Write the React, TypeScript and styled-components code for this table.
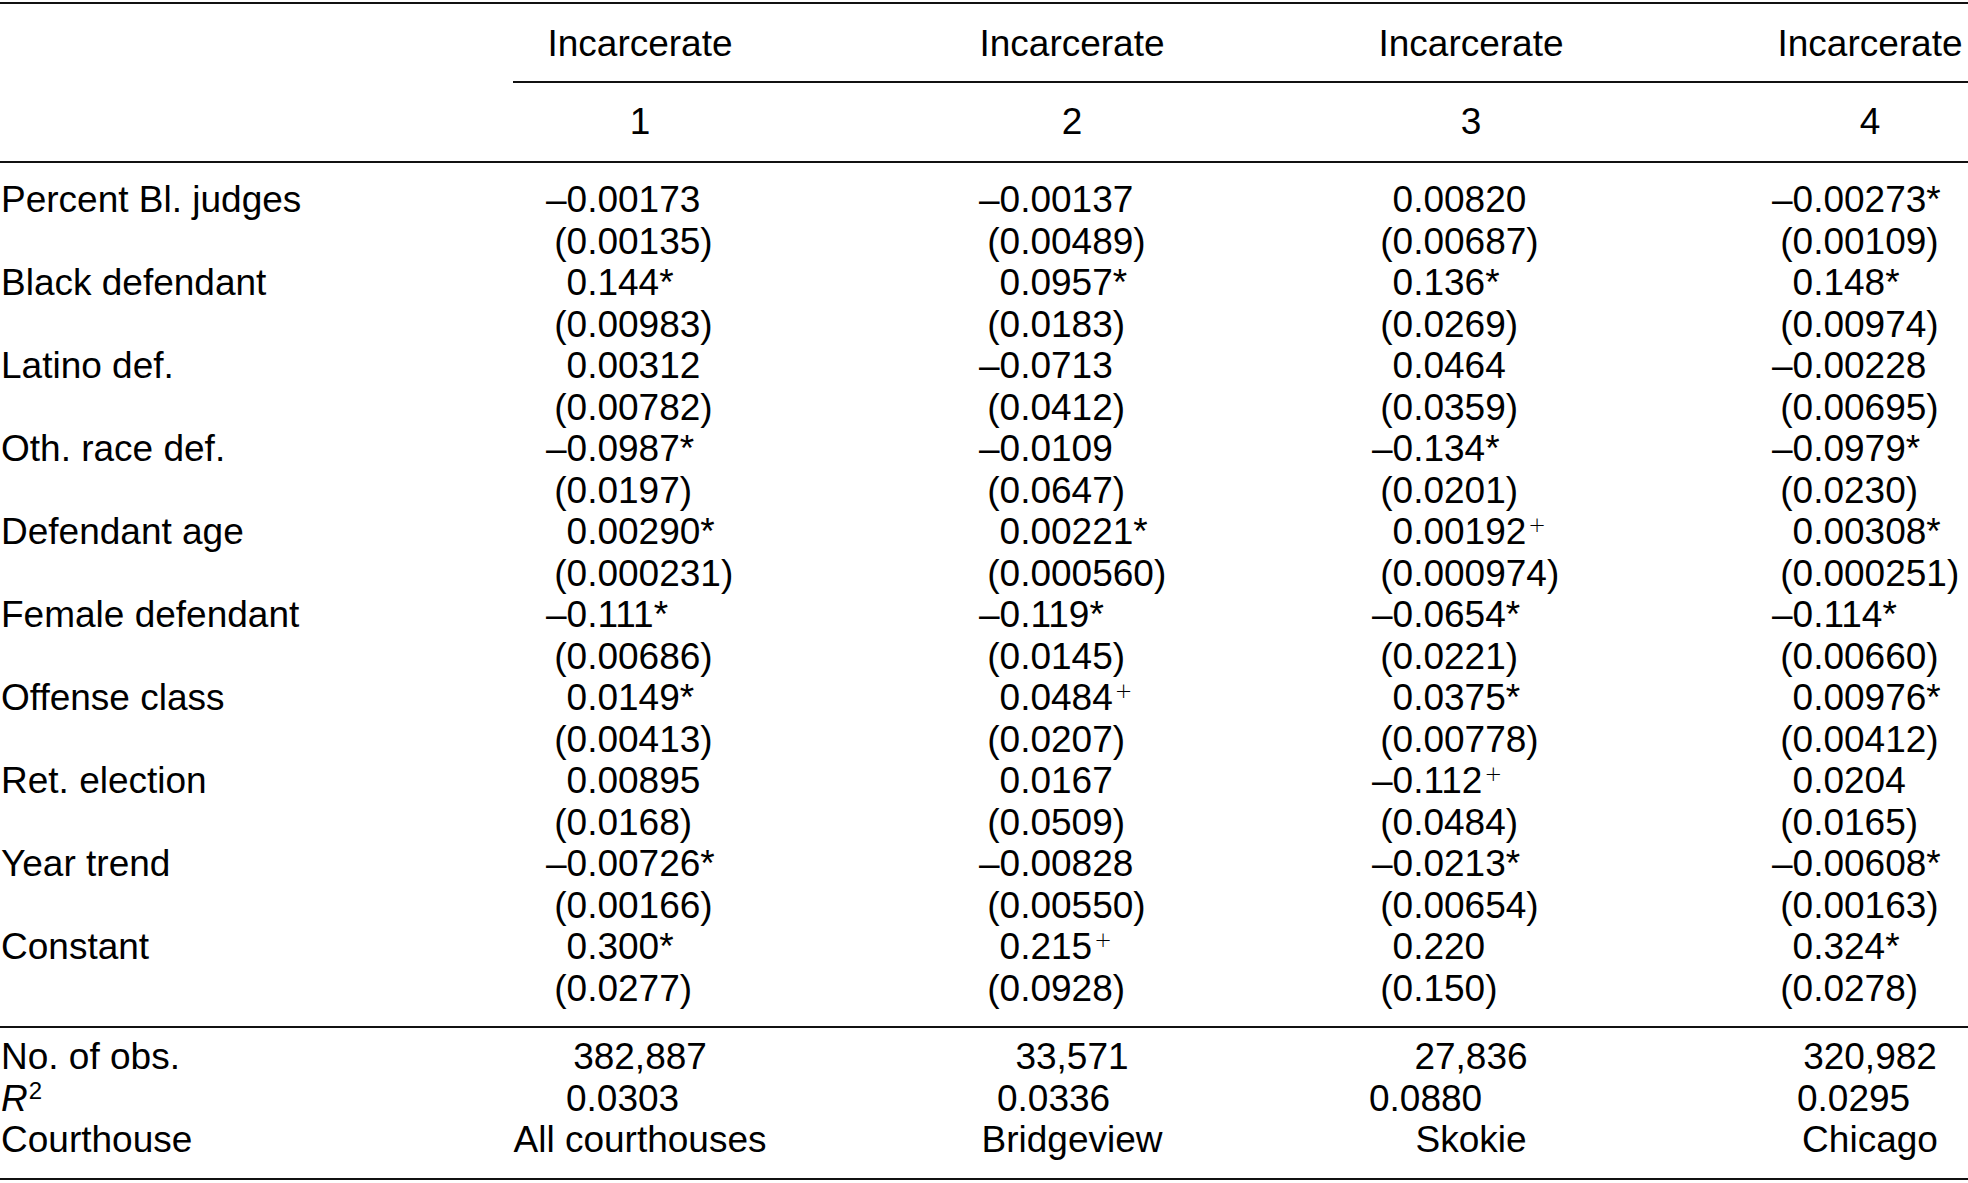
import React from "react";
import styled, { createGlobalStyle } from "styled-components";

const GlobalStyle = createGlobalStyle`
  html, body { margin: 0; padding: 0; background: #fff; overflow: hidden; }
  body { font-family: "Liberation Sans", Arial, Helvetica, sans-serif; color: #000; }
`;

const COLS = "306px 668px 196px 602px 196px";

const Page = styled.div`
  width: 1968px;
  height: 1183px;
  box-sizing: border-box;
  padding-top: 2px;
  font-size: 37px;
  line-height: 41.5px;
`;

const Rule = styled.div<{ $indent?: number }>`
  height: 2px;
  background: #111;
  margin-left: ${(p) => p.$indent ?? 0}px;
`;

const Section = styled.div<{ $top: number; $bottom: number }>`
  display: grid;
  grid-template-columns: ${COLS};
  grid-auto-rows: 41.5px;
  padding: ${(p) => p.$top}px 0 ${(p) => p.$bottom}px;
`;

const Label = styled.div`
  white-space: nowrap;
  padding-left: 1px;
`;

const Center = styled.div`
  text-align: center;
  white-space: nowrap;
`;

const Value = styled.div<{ $pad: number }>`
  padding-left: ${(p) => p.$pad}px;
  white-space: nowrap;
`;

const Sign = styled.span`
  display: inline-block;
  width: 0.556em;
  text-align: right;
`;

const Plus = styled.span`
  font-family: "DejaVu Sans", Inter, sans-serif;
  font-weight: 200;
  font-size: 21px;
  line-height: 0;
  vertical-align: 12px;
  margin-left: 2px;
`;

const Ital = styled.span`
  font-style: italic;
`;

const Sup = styled.span`
  font-size: 24px;
  line-height: 0;
  vertical-align: 12px;
  margin-left: 1px;
`;

type Row = { label: string; cells: [string, string][] };

const ROWS: Row[] = [
  { label: "Percent Bl. judges", cells: [["–0.00173", "(0.00135)"], ["–0.00137", "(0.00489)"], ["0.00820", "(0.00687)"], ["–0.00273*", "(0.00109)"]] },
  { label: "Black defendant", cells: [["0.144*", "(0.00983)"], ["0.0957*", "(0.0183)"], ["0.136*", "(0.0269)"], ["0.148*", "(0.00974)"]] },
  { label: "Latino def.", cells: [["0.00312", "(0.00782)"], ["–0.0713", "(0.0412)"], ["0.0464", "(0.0359)"], ["–0.00228", "(0.00695)"]] },
  { label: "Oth. race def.", cells: [["–0.0987*", "(0.0197)"], ["–0.0109", "(0.0647)"], ["–0.134*", "(0.0201)"], ["–0.0979*", "(0.0230)"]] },
  { label: "Defendant age", cells: [["0.00290*", "(0.000231)"], ["0.00221*", "(0.000560)"], ["0.00192+", "(0.000974)"], ["0.00308*", "(0.000251)"]] },
  { label: "Female defendant", cells: [["–0.111*", "(0.00686)"], ["–0.119*", "(0.0145)"], ["–0.0654*", "(0.0221)"], ["–0.114*", "(0.00660)"]] },
  { label: "Offense class", cells: [["0.0149*", "(0.00413)"], ["0.0484+", "(0.0207)"], ["0.0375*", "(0.00778)"], ["0.00976*", "(0.00412)"]] },
  { label: "Ret. election", cells: [["0.00895", "(0.0168)"], ["0.0167", "(0.0509)"], ["–0.112+", "(0.0484)"], ["0.0204", "(0.0165)"]] },
  { label: "Year trend", cells: [["–0.00726*", "(0.00166)"], ["–0.00828", "(0.00550)"], ["–0.0213*", "(0.00654)"], ["–0.00608*", "(0.00163)"]] },
  { label: "Constant", cells: [["0.300*", "(0.0277)"], ["0.215+", "(0.0928)"], ["0.220", "(0.150)"], ["0.324*", "(0.0278)"]] },
];

const DATA_PAD = [240, 5, 202, 0];
const R2_PAD = [260, 23, 199, 25];

const OBS = ["382,887", "33,571", "27,836", "320,982"];
const R2 = ["0.0303", "0.0336", "0.0880", "0.0295"];
const COURT = ["All courthouses", "Bridgeview", "Skokie", "Chicago"];

function Num({ text }: { text: string }) {
  let sign = "";
  let rest = text;
  if (rest[0] === "–" || rest[0] === "(") {
    sign = rest[0];
    rest = rest.slice(1);
  }
  let mark: React.ReactNode = null;
  if (rest.endsWith("+")) {
    rest = rest.slice(0, -1);
    mark = <Plus>+</Plus>;
  }
  return (
    <>
      <Sign>{sign}</Sign>
      {rest}
      {mark}
    </>
  );
}

export default function App() {
  return (
    <>
      <GlobalStyle />
      <Page>
        <Rule />
        <Section $top={19.4} $bottom={16.1}>
          <Label />
          {[1, 2, 3, 4].map((i) => (
            <Center key={i}>Incarcerate</Center>
          ))}
        </Section>
        <Rule $indent={513} />
        <Section $top={18.4} $bottom={18.1}>
          <Label />
          {[1, 2, 3, 4].map((i) => (
            <Center key={i}>{i}</Center>
          ))}
        </Section>
        <Rule />
        <Section $top={16.4} $bottom={16.6}>
          {ROWS.map((r) => (
            <React.Fragment key={r.label}>
              <Label>{r.label}</Label>
              {r.cells.map((c, i) => (
                <Value key={"c" + i} $pad={DATA_PAD[i]}>
                  <Num text={c[0]} />
                </Value>
              ))}
              <Label />
              {r.cells.map((c, i) => (
                <Value key={"s" + i} $pad={DATA_PAD[i]}>
                  <Num text={c[1]} />
                </Value>
              ))}
            </React.Fragment>
          ))}
        </Section>
        <Rule />
        <Section $top={8.4} $bottom={17.1}>
          <Label>No. of obs.</Label>
          {OBS.map((v) => (
            <Center key={v}>{v}</Center>
          ))}
          <Label>
            <Ital>R</Ital>
            <Sup>2</Sup>
          </Label>
          {R2.map((v, i) => (
            <Value key={v} $pad={R2_PAD[i]}>
              {v}
            </Value>
          ))}
          <Label>Courthouse</Label>
          {COURT.map((v) => (
            <Center key={v}>{v}</Center>
          ))}
        </Section>
        <Rule />
      </Page>
    </>
  );
}
